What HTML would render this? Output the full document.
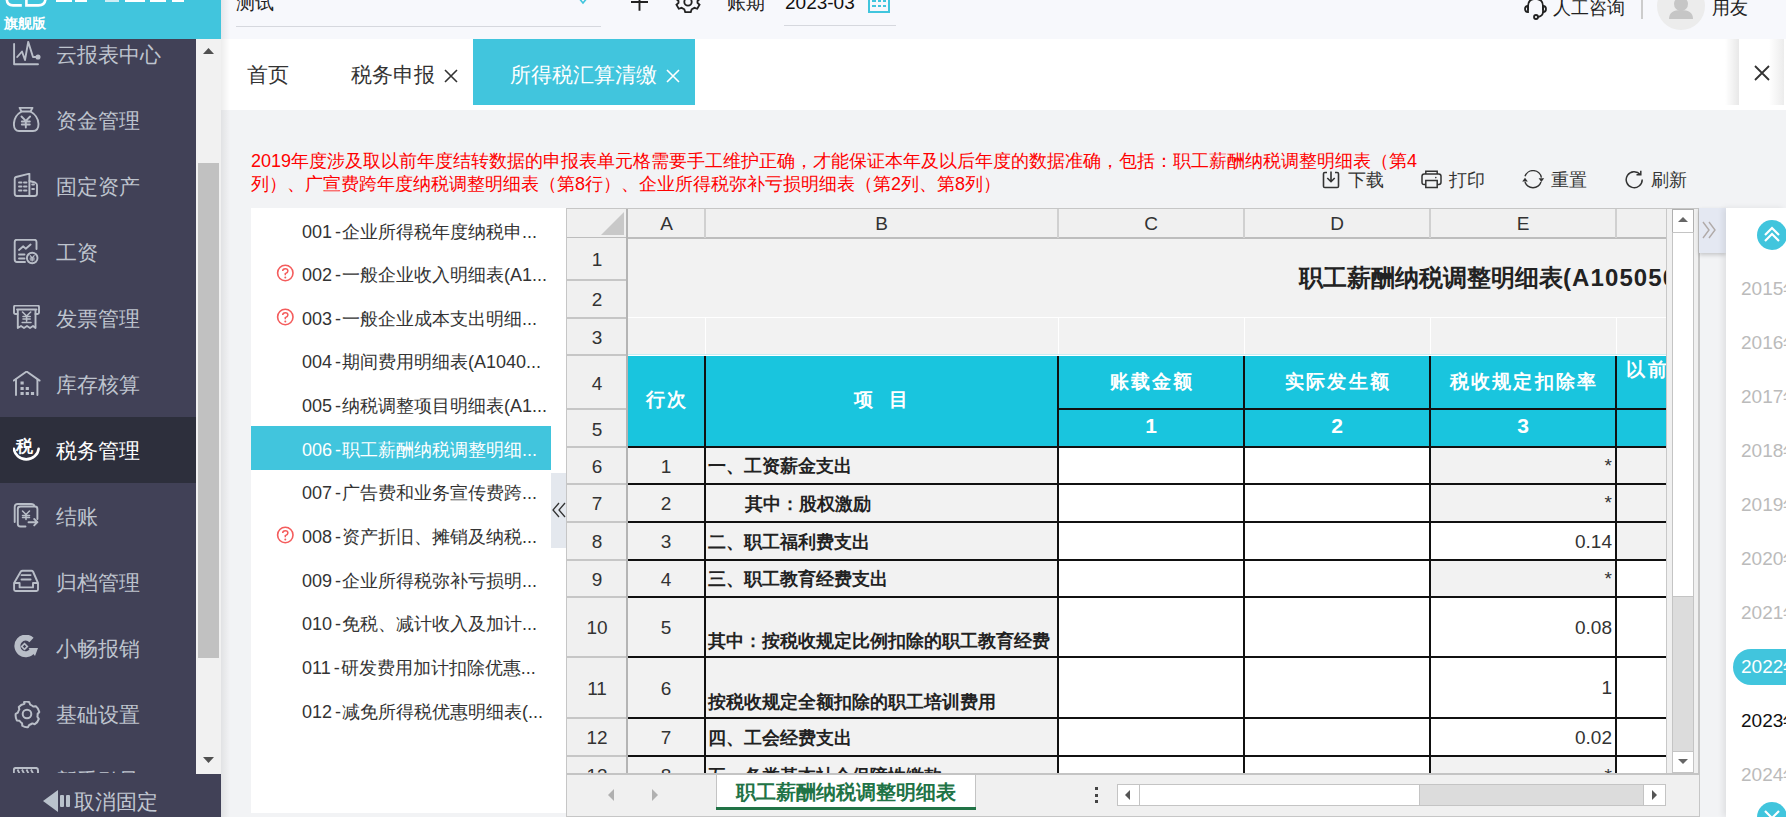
<!DOCTYPE html>
<html><head><meta charset="utf-8">
<style>
*{box-sizing:border-box;margin:0;padding:0}
html,body{width:1786px;height:817px;overflow:hidden;background:#f2f3f5;font-family:"Liberation Sans",sans-serif;color:#333}
.a{position:absolute}
.t{position:absolute;white-space:nowrap;line-height:1}
/* sidebar */
#side{left:0;top:0;width:221px;height:817px;background:#414157}
#logo{left:0;top:0;width:221px;height:39px;background:#41c5dd}
.nav{position:absolute;left:0;width:196px;height:66px}
.nav .tx{position:absolute;left:56px;top:23px;font-size:21px;line-height:21px;color:#bec4ce;white-space:nowrap}
.nav svg{position:absolute;left:13px;top:20px}
.nav.on{background:#2d2f3c}
.nav.on .tx{color:#fff}
/* header */
#hdr{left:221px;top:0;width:1565px;height:39px;background:#f7f8fc}
#tabs{left:221px;top:39px;width:1565px;height:71px;background:#fff}
/* list */
#list{left:251px;top:208px;width:315px;height:605px;background:#fff}
.li{position:absolute;left:0;width:300px;height:43.64px}
.li .tx{position:absolute;left:51px;top:14.5px;font-size:18px;line-height:19px;color:#333;white-space:nowrap}
.li.on{background:#41c5dd}
.li.on .tx{color:#fff}
.q{position:absolute;left:25px;top:12.5px}
/* sheet */
#sheet{left:566px;top:208px;width:1134px;height:609px}
#grid{left:0;top:0;width:1100px;height:565px;overflow:hidden}
.g{position:absolute}
.hl{position:absolute;height:2px;background:#000}
.vl{position:absolute;width:2px;background:#000}
.ch{position:absolute;top:0;height:30px;font-size:19px;line-height:30px;text-align:center;color:#333}
.rh{position:absolute;left:0;width:61px;font-size:19px;text-align:center;color:#333;display:flex;align-items:center;justify-content:center}
.teal{background:#1cc5de}
.wh{background:#fff}
.hd{position:absolute;color:#fff;font-weight:bold;font-size:19px;line-height:20px;white-space:nowrap;font-family:"Liberation Serif",serif;letter-spacing:2.3px;padding-left:2.3px}
.hd2{position:absolute;color:#fff;font-weight:bold;font-size:21px;line-height:20px;white-space:nowrap}
.ttl{position:absolute;color:#222;font-weight:bold;font-size:24px;line-height:26px;white-space:nowrap}
.chd{position:absolute;font-size:19px;line-height:20px;color:#333;white-space:nowrap}
.rnum{position:absolute;font-size:19px;line-height:20px;color:#333;white-space:nowrap}
.stab{position:absolute;font-size:20px;line-height:22px;color:#217346;font-weight:bold;white-space:nowrap}
.ct{position:absolute;font-size:18px;font-weight:bold;color:#222;white-space:nowrap;line-height:19px}
.num{position:absolute;font-size:19px;color:#333;white-space:nowrap;line-height:19px}
/* right */
#rp{left:1726px;top:208px;width:60px;height:609px;background:#fff;box-shadow:-3px 0 6px rgba(0,0,0,0.08)}
.yr{position:absolute;left:15px;font-size:19px;line-height:20px;color:#bbb;white-space:nowrap}
</style></head><body>

<!-- SIDEBAR -->
<div id="side" class="a">
  <div id="logo" class="a">
    <svg class="a" style="left:0;top:0" width="221" height="39">
      <path d="M6.8 -10 V-1 Q6.8 5.4 13 5.4 H21.8" fill="none" stroke="#fff" stroke-width="2.6"/>
      <path d="M26.4 -10 V5.4 H38.5 Q45.5 5.4 45.5 -2 V-10" fill="none" stroke="#fff" stroke-width="2.6"/>
      <rect x="56" y="0" width="16" height="2" fill="#fff"/><rect x="75" y="0" width="12" height="2" fill="#fff"/>
      <rect x="105" y="0" width="14" height="2" fill="#cfeef5"/><rect x="125" y="0" width="20" height="2" fill="#fff"/>
      <rect x="150" y="0" width="16" height="2" fill="#fff"/><rect x="172" y="0" width="12" height="2" fill="#fff"/>
    </svg>
    <div class="t" style="left:4px;top:16px;font-size:14px;font-weight:bold;color:#fff">旗舰版</div>
  </div>
  <div class="a" style="left:0;top:39px;width:196px;height:734px;overflow:hidden">
    <div class="nav" style="top:-18px">
      <svg width="28" height="28" viewBox="0 0 28 28" fill="none" stroke="#b9bec8" stroke-width="1.9" stroke-linecap="round" stroke-linejoin="round"><path d="M1.1 3 V23.3 H25"/><path d="M4.2 16 L9 10.5 L12 19 L15.2 0.9 L20 16 H24"/><circle cx="25" cy="16" r="1.6" fill="#b9bec8"/></svg>
      <div class="tx">云报表中心</div></div>
    <div class="nav" style="top:48px">
      <svg width="28" height="28" viewBox="0 0 28 28" fill="none" stroke="#b9bec8" stroke-width="1.9" stroke-linecap="round" stroke-linejoin="round"><path d="M6.6 0.9 H19.5 L17.5 4.5 H8.5 Z"/><path d="M8.5 4.5 Q1 9 0.9 17 Q0.9 24 6 24 H20 Q25.5 24 25.5 17 Q25.3 9 17.5 4.5"/><path d="M8.5 9.5 L12.8 13.8 L17.1 9.5 M12.8 13.8 V20.5 M8.8 14.5 H16.8 M8.8 17.5 H16.8"/></svg>
      <div class="tx">资金管理</div></div>
    <div class="nav" style="top:114px">
      <svg width="28" height="28" viewBox="0 0 28 28" fill="none" stroke="#b9bec8" stroke-width="1.9" stroke-linecap="round" stroke-linejoin="round"><path d="M16.4 23 H4 Q1.7 23 1.7 20.5 V6 Q1.7 4.5 3 4 L16.4 0.7 Z"/><path d="M16.4 8 L22 9.5 Q24 10.5 24 12 V20.5 Q24 23 21.5 23 H16.4"/><path d="M6 9.5 H8.5 M11 9.5 H13.5 M6 13.5 H8.5 M11 13.5 H13.5 M6 17.5 H8.5 M11 17.5 H13.5 M19.2 11.5 H21 M19.2 16 H21"/></svg>
      <div class="tx">固定资产</div></div>
    <div class="nav" style="top:180px">
      <svg width="28" height="28" viewBox="0 0 28 28" fill="none" stroke="#b9bec8" stroke-width="1.9" stroke-linecap="round" stroke-linejoin="round"><path d="M12 23 H4 Q1.7 23 1.7 20.5 V3 Q1.7 0.7 4 0.7 H21 Q23.5 0.7 23.5 3 V10"/><path d="M6 11 L10.3 7.3 L12.7 9.7 L17.6 5.5"/><path d="M6 15.5 H11.5 M6 19.5 H11.5"/><circle cx="19.2" cy="19" r="5.3"/><path d="M17.2 16.6 L19.2 18.8 L21.2 16.6 M19.2 18.8 V22 M17.2 19.2 H21.2 M17.2 20.8 H21.2" stroke-width="1.2"/></svg>
      <div class="tx">工资</div></div>
    <div class="nav" style="top:246px">
      <svg width="28" height="28" viewBox="0 0 28 28" fill="none" stroke="#b9bec8" stroke-width="1.9" stroke-linecap="round" stroke-linejoin="round"><path d="M4.5 9 H2.5 Q1 9 1 7.5 V2 Q1 0.5 2.5 0.5 H24.5 Q26 0.5 26 2 V7.5 Q26 9 24.5 9 H22.5"/><path d="M4.8 4.5 V23 L8 21 L11 23 L14 21 L17 23 L20 21 L22.5 23 V4.5 M4 4.5 H23.5"/><path d="M9.5 7 L13.6 11 L17.7 7 M13.6 11 V16 M10 11.5 H17.2 M10 14 H17.2 M9.2 17.5 H18" stroke-width="1.6"/></svg>
      <div class="tx">发票管理</div></div>
    <div class="nav" style="top:312px">
      <svg width="28" height="28" viewBox="0 0 28 28" fill="none" stroke="#b9bec8" stroke-width="1.9" stroke-linecap="round" stroke-linejoin="round"><path d="M0.8 9.6 L13.6 0.5 L26.6 9.6"/><path d="M3 8.5 V24 M24.4 8.5 V24"/><g fill="#b9bec8" stroke="none"><rect x="7.5" y="10.5" width="3.2" height="3"/><rect x="7.5" y="16" width="3.2" height="3"/><rect x="12.7" y="16" width="3.2" height="3"/><rect x="7.5" y="21" width="3.2" height="3"/><rect x="12.7" y="21" width="3.2" height="3"/><rect x="17.9" y="21" width="3.2" height="3"/></g></svg>
      <div class="tx">库存核算</div></div>
    <div class="nav on" style="top:378px">
      <svg width="28" height="28" viewBox="0 0 28 28" fill="none" stroke="#fff" stroke-width="2.6" stroke-linecap="round"><path d="M0.9 11.8 A12.4 11.6 0 0 0 25.6 11.8"/><text x="3.2" y="14.5" font-size="16.5" font-weight="bold" fill="#fff" stroke="none" font-family="Liberation Sans,sans-serif">税</text></svg>
      <div class="tx">税务管理</div></div>
    <div class="nav" style="top:444px">
      <svg width="28" height="28" viewBox="0 0 28 28" fill="none" stroke="#b9bec8" stroke-width="1.9" stroke-linecap="round" stroke-linejoin="round"><path d="M1.7 19 V4 Q1.7 1 4.7 1 H18 Q21 1 21.3 3"/><path d="M24.4 16 V6 Q24.4 3.5 22 3.5 H7.5 Q4.8 3.5 4.8 6 V21 Q4.8 23.5 7.5 23.5 H12.5"/><path d="M9.5 8 L13 11.5 L16.5 8 M13 11.5 V16.5 M9.5 12.5 H16.5 M9.5 14.5 H16.5" stroke-width="1.5"/><path d="M15.5 19.2 H24.4 M21.2 16 L24.4 19.2 L21.2 22.4"/></svg>
      <div class="tx">结账</div></div>
    <div class="nav" style="top:510px">
      <svg width="28" height="28" viewBox="0 0 28 28" fill="none" stroke="#b9bec8" stroke-width="1.9" stroke-linecap="round" stroke-linejoin="round"><path d="M1.1 14 L7.8 2.5 Q8.5 1.8 9.5 1.8 H18.5 Q19.5 1.8 20 2.5 L25 14 V20.5 Q25 22 23.5 22 H2.6 Q1.1 22 1.1 20.5 Z M1.1 14 H6.6 V18.4 H20 V14 H25"/><path d="M8.5 6.1 H17.6 M8.5 10.5 H17.6"/></svg>
      <div class="tx">归档管理</div></div>
    <div class="nav" style="top:576px">
      <svg width="28" height="28" viewBox="0 0 28 28"><path d="M18.5 5 A8.3 8.3 0 1 0 19.6 15.5" fill="none" stroke="#b9bec8" stroke-width="6"/><path d="M15.5 13 H25 L22 21 Z" fill="#b9bec8"/><path d="M11.5 7.5 L15.5 11.5 L11.5 15.5 L7.5 11.5 Z" fill="#b9bec8"/><path d="M11.5 9.8 L13.2 11.5 L11.5 13.2 L9.8 11.5 Z" fill="#414157"/></svg>
      <div class="tx">小畅报销</div></div>
    <div class="nav" style="top:642px">
      <svg width="28" height="28" viewBox="0 0 28 28" fill="none" stroke="#b9bec8" stroke-width="2" stroke-linejoin="round"><path d="M11 1.2 Q13.6 -0.3 16.2 1.2 L17.2 3.6 Q19 4.3 20.3 5.6 L22.9 5.3 Q25.6 7.5 26.3 11 L24.6 13 Q24.7 14.4 24.4 15.7 L25.8 17.9 Q24.8 21.3 21.8 23.2 L19.4 22.4 Q18 23.5 16.2 24 L14.9 26.3 Q11.9 26.6 9.3 24.8 L9.1 22.3 Q7.5 21.3 6.5 19.8 L3.9 19.4 Q2.2 16.3 2.7 12.9 L4.9 11.6 Q5.3 9.9 6.3 8.5 L5.8 6 Q8.1 3.4 11.5 2.7 Z"/><circle cx="14" cy="13" r="4.3"/></svg>
      <div class="tx">基础设置</div></div>
    <div class="nav" style="top:708px">
      <svg width="28" height="28" viewBox="0 0 28 28"><path d="M0.8 9 V3.2 Q0.8 0.9 3.2 0.9 H22.6 Q25 0.9 25 3.2 V9" fill="none" stroke="#b9bec8" stroke-width="2"/><path d="M4.5 2.5 L6.5 6.5 M9 2.5 L11 6.5 M13.5 2.5 L15.5 6.5 M18 2.5 L20 6.5" stroke="#b9bec8" stroke-width="1.8"/></svg>
      <div class="tx">新手引导</div></div>
  </div>
  <!-- sidebar scrollbar -->
  <div class="a" style="left:196px;top:39px;width:25px;height:735px;background:#f1f1f1"></div>
  <div class="a" style="left:198px;top:163px;width:21px;height:495px;background:#c1c1c1"></div>
  <svg class="a" style="left:196px;top:39px" width="25" height="735"><path d="M7 15 L12.5 9 L18 15 Z" fill="#505050"/><path d="M7 718 L12.5 724 L18 718 Z" fill="#505050"/></svg>
  <!-- bottom -->
  <div class="a" style="left:0;top:774px;width:221px;height:43px;background:#414157"></div>
  <svg class="a" style="left:43px;top:790px" width="30" height="22"><path d="M15 0 V22 L0 11 Z" fill="#b9c2cc"/><rect x="17" y="5" width="4" height="12" rx="1" fill="#b9c2cc"/><rect x="23" y="5" width="4" height="12" rx="1" fill="#b9c2cc"/></svg>
  <div class="t" style="left:74px;top:791px;font-size:21px;color:#c2c8d2">取消固定</div>
</div>


<!-- HEADER -->
<div id="hdr" class="a">
  <div class="t" style="left:15px;top:-7px;font-size:19px;color:#222">测试</div>
  <div class="a" style="left:15px;top:26px;width:365px;height:1px;background:#d6d8de"></div>
  <svg class="a" style="left:356px;top:0" width="12" height="6"><path d="M1 -3 L6 3 L11 -3" fill="none" stroke="#41c5dd" stroke-width="1.6"/></svg>
  <svg class="a" style="left:409px;top:0" width="20" height="14"><path d="M9.5 -8 V10.8 M1 2 H18" stroke="#222" stroke-width="1.9"/></svg>
  <svg class="a" style="left:454px;top:-11px" width="26" height="24" viewBox="0 -2 26 26" fill="none" stroke="#222" stroke-width="2"><path d="M10 1 H16 L17 4 L20 5.6 L23 4.6 L25.5 9 L23.3 11 V13 L25.5 15 L23 19.4 L20 18.4 L17 20 L16 23 H10 L9 20 L6 18.4 L3 19.4 L0.5 15 L2.7 13 V11 L0.5 9 L3 4.6 L6 5.6 L9 4 Z"/><circle cx="13" cy="12" r="4"/></svg>
  <div class="t" style="left:506px;top:-7px;font-size:19px;color:#222">账期</div>
  <div class="t" style="left:564px;top:-7px;font-size:19px;color:#111">2023-03</div>
  <div class="a" style="left:563px;top:25px;width:112px;height:1px;background:#d6d8de"></div>
  <svg class="a" style="left:647px;top:-8px" width="22" height="21"><rect x="1" y="1" width="20" height="19" fill="none" stroke="#41c5dd" stroke-width="2"/><path d="M4 9 H8 M10 9 H13 M15 9 H18 M4 14 H8 M10 14 H13 M15 14 H18" stroke="#41c5dd" stroke-width="2"/></svg>
  <!-- right -->
  <svg class="a" style="left:1303px;top:-2px" width="23" height="22" fill="none" stroke="#222" stroke-width="1.8"><path d="M4 12 V8 Q4 1 11.5 1 Q19 1 19 8 V12"/><path d="M4 8 Q1 8 1 11 Q1 14 4 14 Z M19 8 Q22 8 22 11 Q22 14 19 14 Z"/><path d="M19 14 Q19 18 14 19"/><circle cx="12" cy="19" r="2"/></svg>
  <div class="t" style="left:1332px;top:-1px;font-size:18px;color:#222">人工咨询</div>
  <div class="a" style="left:1420px;top:0;width:2px;height:19px;background:#ccc"></div>
  <div class="a" style="left:1436px;top:-18px;width:48px;height:48px;border-radius:50%;background:#ececec;overflow:hidden">
    <svg width="48" height="48"><circle cx="24" cy="22" r="7" fill="#c6c6c6"/><path d="M12 37 Q12 28 24 28 Q36 28 36 37 Z" fill="#c6c6c6"/></svg>
  </div>
  <div class="t" style="left:1491px;top:-1px;font-size:18px;color:#222">用友</div>
</div>

<!-- TABS -->
<div id="tabs" class="a">
  <div class="t" style="left:26px;top:25px;font-size:21px;color:#333">首页</div>
  <div class="t" style="left:130px;top:25px;font-size:21px;color:#333">税务申报</div>
  <svg class="a" style="left:223px;top:30px" width="14" height="14"><path d="M1 1 L13 13 M13 1 L1 13" stroke="#333" stroke-width="1.6"/></svg>
  <div class="a" style="left:252px;top:0;width:222px;height:66px;background:#41c5dd"></div>
  <div class="t" style="left:289px;top:25px;font-size:21px;color:#fff">所得税汇算清缴</div>
  <svg class="a" style="left:445px;top:30px" width="14" height="14"><path d="M1 1 L13 13 M13 1 L1 13" stroke="#fff" stroke-width="1.6"/></svg>
  <div class="a" style="left:1504px;top:0;width:14px;height:66px;background:linear-gradient(to right,rgba(0,0,0,0),rgba(0,0,0,0.09))"></div><div class="a" style="left:1518px;top:0;width:45px;height:66px;background:linear-gradient(to right,#fff 0,#fff 30px,#ececec 45px)"></div><div class="a" style="left:1563px;top:0;width:2px;height:66px;background:#fff"></div>
  <svg class="a" style="left:1533px;top:26px" width="16" height="16"><path d="M1 1 L15 15 M15 1 L1 15" stroke="#333" stroke-width="1.8"/></svg>
</div>

<!-- NOTICE -->
<div class="t" style="left:251px;top:148.5px;font-size:18px;line-height:24px;color:#f00">2019年度涉及取以前年度结转数据的申报表单元格需要手工维护正确，才能保证本年及以后年度的数据准确，包括：职工薪酬纳税调整明细表（第4</div>
<div class="t" style="left:251px;top:172px;font-size:18px;line-height:24px;color:#f00">列）、广宣费跨年度纳税调整明细表（第8行）、企业所得税弥补亏损明细表（第2列、第8列）</div>

<!-- TOOLBAR -->
<svg class="a" style="left:1322px;top:171px" width="18" height="18" fill="none" stroke="#333" stroke-width="1.6"><path d="M5 1.5 H2.8 Q1.5 1.5 1.5 2.8 V15.2 Q1.5 16.5 2.8 16.5 H15.2 Q16.5 16.5 16.5 15.2 V2.8 Q16.5 1.5 15.2 1.5 H13"/><path d="M9 0.5 V10.5 M5.3 7 L9 10.7 L12.7 7"/></svg>
<div class="t" style="left:1348px;top:171px;font-size:18px;color:#333">下载</div>
<svg class="a" style="left:1421px;top:170px" width="21" height="19" fill="none" stroke="#333" stroke-width="1.5"><path d="M4.8 4 V1.2 H16.2 V4"/><path d="M4.8 14.5 H3.2 Q1 14.5 1 12.3 V6.3 Q1 4 3.2 4 H17.8 Q20 4 20 6.3 V12.3 Q20 14.5 17.8 14.5 H16.2"/><rect x="4.8" y="10.5" width="11.4" height="7"/><circle cx="14.8" cy="7.6" r="0.8" fill="#333" stroke="none"/></svg>
<div class="t" style="left:1449px;top:171px;font-size:18px;color:#333">打印</div>
<svg class="a" style="left:1521px;top:170px" width="24" height="20" fill="none" stroke="#333" stroke-width="1.4"><path d="M4 6.3 A8.5 8.5 0 0 1 20.4 7.7"/><path d="M17.6 8.3 H23.2 L20.4 12 Z" fill="#333" stroke="none"/><path d="M20 12.1 A8.5 8.5 0 0 1 4 12.1"/><path d="M1.2 11.5 H6.8 L4 7.8 Z" fill="#333" stroke="none"/></svg>
<div class="t" style="left:1551px;top:171px;font-size:18px;color:#333">重置</div>
<svg class="a" style="left:1625px;top:170px" width="19" height="19" fill="none" stroke="#333" stroke-width="1.5"><path d="M15.3 4.5 A8 8 0 1 0 17.2 9.5"/><path d="M11.5 4.8 H15.8 V0.8"/></svg>
<div class="t" style="left:1651px;top:171px;font-size:18px;color:#333">刷新</div>

<!-- LIST -->
<div id="list" class="a">
  <div class="li" style="top:0.00px"><div class="tx">001<span style="margin:0 1px 0 3px">-</span>企业所得税年度纳税申...</div></div>
  <div class="li" style="top:43.64px"><svg class="q" width="19" height="19"><circle cx="9.3" cy="9" r="7.7" fill="none" stroke="#f45c5c" stroke-width="1.6"/><path d="M6.7 7 Q6.7 4.7 9.3 4.7 Q11.9 4.7 11.9 6.9 Q11.9 8.5 9.3 9.6 V11.3" fill="none" stroke="#f45c5c" stroke-width="1.5"/><circle cx="9.3" cy="13.6" r="1" fill="#f45c5c"/></svg><div class="tx">002<span style="margin:0 1px 0 3px">-</span>一般企业收入明细表(A1...</div></div>
  <div class="li" style="top:87.28px"><svg class="q" width="19" height="19"><circle cx="9.3" cy="9" r="7.7" fill="none" stroke="#f45c5c" stroke-width="1.6"/><path d="M6.7 7 Q6.7 4.7 9.3 4.7 Q11.9 4.7 11.9 6.9 Q11.9 8.5 9.3 9.6 V11.3" fill="none" stroke="#f45c5c" stroke-width="1.5"/><circle cx="9.3" cy="13.6" r="1" fill="#f45c5c"/></svg><div class="tx">003<span style="margin:0 1px 0 3px">-</span>一般企业成本支出明细...</div></div>
  <div class="li" style="top:130.92px"><div class="tx">004<span style="margin:0 1px 0 3px">-</span>期间费用明细表(A1040...</div></div>
  <div class="li" style="top:174.56px"><div class="tx">005<span style="margin:0 1px 0 3px">-</span>纳税调整项目明细表(A1...</div></div>
  <div class="li on" style="top:218.20px"><div class="tx">006<span style="margin:0 1px 0 3px">-</span>职工薪酬纳税调整明细...</div></div>
  <div class="li" style="top:261.84px"><div class="tx">007<span style="margin:0 1px 0 3px">-</span>广告费和业务宣传费跨...</div></div>
  <div class="li" style="top:305.48px"><svg class="q" width="19" height="19"><circle cx="9.3" cy="9" r="7.7" fill="none" stroke="#f45c5c" stroke-width="1.6"/><path d="M6.7 7 Q6.7 4.7 9.3 4.7 Q11.9 4.7 11.9 6.9 Q11.9 8.5 9.3 9.6 V11.3" fill="none" stroke="#f45c5c" stroke-width="1.5"/><circle cx="9.3" cy="13.6" r="1" fill="#f45c5c"/></svg><div class="tx">008<span style="margin:0 1px 0 3px">-</span>资产折旧、摊销及纳税...</div></div>
  <div class="li" style="top:349.12px"><div class="tx">009<span style="margin:0 1px 0 3px">-</span>企业所得税弥补亏损明...</div></div>
  <div class="li" style="top:392.76px"><div class="tx">010<span style="margin:0 1px 0 3px">-</span>免税、减计收入及加计...</div></div>
  <div class="li" style="top:436.40px"><div class="tx">011<span style="margin:0 1px 0 3px">-</span>研发费用加计扣除优惠...</div></div>
  <div class="li" style="top:480.04px"><div class="tx">012<span style="margin:0 1px 0 3px">-</span>减免所得税优惠明细表(...</div></div>
</div>
<div class="a" style="left:551px;top:473px;width:15px;height:75px;background:#e4e8ee"></div>
<svg class="a" style="left:552px;top:502px" width="14" height="16" fill="none" stroke="#333" stroke-width="1.3"><path d="M7 1 L1 8 L7 15 M13 1 L7 8 L13 15"/></svg>

<!-- SHEET -->
<div id="sheet" class="a">
<div class="g" style="left:0.0px;top:0.0px;width:1133.0px;height:607.0px;background:#f0f0f0;border:1px solid #c6c6c6"></div>
<div class="g" style="left:62px;top:30px;width:1038px;height:536px;overflow:hidden;background:#f2f2f2">
<div class="g" style="left:0.0px;top:78.5px;width:1038.0px;height:1.0px;background:#fff"></div>
<div class="g" style="left:76.5px;top:79.5px;width:1.0px;height:37.5px;background:#fff"></div>
<div class="g" style="left:429.5px;top:79.5px;width:1.0px;height:37.5px;background:#fff"></div>
<div class="g" style="left:615.5px;top:79.5px;width:1.0px;height:37.5px;background:#fff"></div>
<div class="g" style="left:801.5px;top:79.5px;width:1.0px;height:37.5px;background:#fff"></div>
<div class="g" style="left:987.5px;top:79.5px;width:1.0px;height:37.5px;background:#fff"></div>
<div class="g" style="left:0.0px;top:117.0px;width:1038.0px;height:91.5px;background:#19c5de"></div>
<div class="g" style="left:0.0px;top:116.0px;width:1038.0px;height:1.0px;background:#c8eef4"></div>
<div class="g" style="left:0.0px;top:117.0px;width:1038.0px;height:1.0px;background:#ffffff"></div>
<div class="g" style="left:430.0px;top:208.5px;width:372.0px;height:37.5px;background:#fff"></div>
<div class="g" style="left:430.0px;top:246.0px;width:372.0px;height:37.8px;background:#fff"></div>
<div class="g" style="left:430.0px;top:283.8px;width:372.0px;height:37.7px;background:#fff"></div>
<div class="g" style="left:802.0px;top:283.8px;width:186.0px;height:37.7px;background:#fff"></div>
<div class="g" style="left:430.0px;top:321.5px;width:372.0px;height:37.5px;background:#fff"></div>
<div class="g" style="left:988.0px;top:321.5px;width:50.0px;height:37.5px;background:#fff"></div>
<div class="g" style="left:430.0px;top:359.0px;width:372.0px;height:60.0px;background:#fff"></div>
<div class="g" style="left:802.0px;top:359.0px;width:186.0px;height:60.0px;background:#fff"></div>
<div class="g" style="left:988.0px;top:359.0px;width:50.0px;height:60.0px;background:#fff"></div>
<div class="g" style="left:430.0px;top:419.0px;width:372.0px;height:61.0px;background:#fff"></div>
<div class="g" style="left:802.0px;top:419.0px;width:186.0px;height:61.0px;background:#fff"></div>
<div class="g" style="left:988.0px;top:419.0px;width:50.0px;height:61.0px;background:#fff"></div>
<div class="g" style="left:430.0px;top:480.0px;width:372.0px;height:38.0px;background:#fff"></div>
<div class="g" style="left:802.0px;top:480.0px;width:186.0px;height:38.0px;background:#fff"></div>
<div class="g" style="left:988.0px;top:480.0px;width:50.0px;height:38.0px;background:#fff"></div>
<div class="g" style="left:430.0px;top:518.0px;width:372.0px;height:38.0px;background:#fff"></div>
<div class="g" style="left:988.0px;top:518.0px;width:50.0px;height:38.0px;background:#fff"></div>
<div class="g" style="left:76.0px;top:118.0px;width:2.0px;height:418.0px;background:#111"></div>
<div class="g" style="left:429.0px;top:118.0px;width:2.0px;height:418.0px;background:#111"></div>
<div class="g" style="left:615.0px;top:118.0px;width:2.0px;height:418.0px;background:#111"></div>
<div class="g" style="left:801.0px;top:118.0px;width:2.0px;height:418.0px;background:#111"></div>
<div class="g" style="left:987.0px;top:118.0px;width:2.0px;height:418.0px;background:#111"></div>
<div class="g" style="left:430.0px;top:170.0px;width:608.0px;height:2.0px;background:#111"></div>
<div class="g" style="left:0.0px;top:207.5px;width:1038.0px;height:2.0px;background:#111"></div>
<div class="g" style="left:0.0px;top:245.0px;width:1038.0px;height:2.0px;background:#111"></div>
<div class="g" style="left:0.0px;top:282.8px;width:1038.0px;height:2.0px;background:#111"></div>
<div class="g" style="left:0.0px;top:320.5px;width:1038.0px;height:2.0px;background:#111"></div>
<div class="g" style="left:0.0px;top:358.0px;width:1038.0px;height:2.0px;background:#111"></div>
<div class="g" style="left:0.0px;top:418.0px;width:1038.0px;height:2.0px;background:#111"></div>
<div class="g" style="left:0.0px;top:479.0px;width:1038.0px;height:2.0px;background:#111"></div>
<div class="g" style="left:0.0px;top:517.0px;width:1038.0px;height:2.0px;background:#111"></div>
<div class="ttl" style="left:671.0px;top:27.0px;">职工薪酬纳税调整明细表<span style="letter-spacing:1.1px">(A105050)</span></div>
<div class="hd" style="left:-0.5px;width:77px;text-align:center;top:152.0px;">行次</div>
<div class="hd" style="left:76.5px;width:353px;text-align:center;top:152.0px;">项&nbsp;&nbsp;目</div>
<div class="hd" style="left:430.0px;width:186px;text-align:center;top:134.0px;">账载金额</div>
<div class="hd" style="left:616.0px;width:186px;text-align:center;top:134.0px;">实际发生额</div>
<div class="hd" style="left:802.0px;width:186px;text-align:center;top:134.0px;">税收规定扣除率</div>
<div class="hd" style="left:996.0px;top:122.0px;">以前年度累计结转扣除额</div>
<div class="hd2" style="left:430.0px;width:186px;text-align:center;top:178.0px;">1</div>
<div class="hd2" style="left:616.0px;width:186px;text-align:center;top:178.0px;">2</div>
<div class="hd2" style="left:802.0px;width:186px;text-align:center;top:178.0px;">3</div>
<div class="num" style="left:-0.5px;width:77px;text-align:center;top:219.0px;">1</div>
<div class="ct" style="left:80.0px;top:219.0px;">一、工资薪金支出</div>
<div class="num" style="left:804.0px;width:180px;text-align:right;top:218.0px;">*</div>
<div class="num" style="left:-0.5px;width:77px;text-align:center;top:256.0px;">2</div>
<div class="ct" style="left:117.0px;top:257.0px;">其中：股权激励</div>
<div class="num" style="left:804.0px;width:180px;text-align:right;top:255.0px;">*</div>
<div class="num" style="left:-0.5px;width:77px;text-align:center;top:294.0px;">3</div>
<div class="ct" style="left:80.0px;top:295.0px;">二、职工福利费支出</div>
<div class="num" style="left:804.0px;width:180px;text-align:right;top:294.0px;">0.14</div>
<div class="num" style="left:-0.5px;width:77px;text-align:center;top:332.0px;">4</div>
<div class="ct" style="left:80.0px;top:332.0px;">三、职工教育经费支出</div>
<div class="num" style="left:804.0px;width:180px;text-align:right;top:331.0px;">*</div>
<div class="num" style="left:-0.5px;width:77px;text-align:center;top:380.0px;">5</div>
<div class="ct" style="left:80.0px;top:394.0px;">其中：按税收规定比例扣除的职工教育经费</div>
<div class="num" style="left:804.0px;width:180px;text-align:right;top:380.0px;">0.08</div>
<div class="num" style="left:-0.5px;width:77px;text-align:center;top:441.0px;">6</div>
<div class="ct" style="left:80.0px;top:455.0px;">按税收规定全额扣除的职工培训费用</div>
<div class="num" style="left:804.0px;width:180px;text-align:right;top:440.0px;">1</div>
<div class="num" style="left:-0.5px;width:77px;text-align:center;top:490.0px;">7</div>
<div class="ct" style="left:80.0px;top:491.0px;">四、工会经费支出</div>
<div class="num" style="left:804.0px;width:180px;text-align:right;top:490.0px;">0.02</div>
<div class="num" style="left:-0.5px;width:77px;text-align:center;top:528.0px;">8</div>
<div class="ct" style="left:80.0px;top:529.0px;">五、各类基本社会保障性缴款</div>
<div class="num" style="left:804.0px;width:180px;text-align:right;top:528.0px;">*</div>
</div>
<div class="g" style="left:0.0px;top:0.0px;width:1100.0px;height:30.0px;background:#f0f0f0"></div>
<div class="g" style="left:0.0px;top:29.0px;width:1100.0px;height:2.0px;background:#bdbdbd"></div>
<div class="g" style="left:138.0px;top:0.0px;width:2.0px;height:30.0px;background:#d0d0d0"></div>
<div class="g" style="left:491.0px;top:0.0px;width:2.0px;height:30.0px;background:#d0d0d0"></div>
<div class="g" style="left:677.0px;top:0.0px;width:2.0px;height:30.0px;background:#d0d0d0"></div>
<div class="g" style="left:863.0px;top:0.0px;width:2.0px;height:30.0px;background:#d0d0d0"></div>
<div class="g" style="left:1049.0px;top:0.0px;width:2.0px;height:30.0px;background:#d0d0d0"></div>
<div class="g" style="left:1100.0px;top:0.0px;width:1.0px;height:565.0px;background:#c8c8c8"></div>
<div class="chd" style="left:-49.5px;width:300px;text-align:center;top:6.0px;">A</div>
<div class="chd" style="left:165.5px;width:300px;text-align:center;top:6.0px;">B</div>
<div class="chd" style="left:435.0px;width:300px;text-align:center;top:6.0px;">C</div>
<div class="chd" style="left:621.0px;width:300px;text-align:center;top:6.0px;">D</div>
<div class="chd" style="left:807.0px;width:300px;text-align:center;top:6.0px;">E</div>
<svg class="g" style="left:35px;top:3px" width="24" height="24"><path d="M0 24 L23 24 L23 1 Z" fill="#c8c8c8"/></svg>
<div class="g" style="left:0.0px;top:30.0px;width:62.0px;height:535.0px;background:#f0f0f0"></div>
<div class="g" style="left:60.0px;top:0.0px;width:2.0px;height:565.0px;background:#b4b4b4"></div>
<div class="g" style="left:0.0px;top:71.0px;width:60.0px;height:2.0px;background:#c6c6c6"></div>
<div class="g" style="left:0.0px;top:108.5px;width:60.0px;height:2.0px;background:#c6c6c6"></div>
<div class="g" style="left:0.0px;top:146.0px;width:60.0px;height:2.0px;background:#c6c6c6"></div>
<div class="g" style="left:0.0px;top:200.0px;width:60.0px;height:2.0px;background:#c6c6c6"></div>
<div class="g" style="left:0.0px;top:237.5px;width:60.0px;height:2.0px;background:#c6c6c6"></div>
<div class="g" style="left:0.0px;top:275.0px;width:60.0px;height:2.0px;background:#c6c6c6"></div>
<div class="g" style="left:0.0px;top:312.8px;width:60.0px;height:2.0px;background:#c6c6c6"></div>
<div class="g" style="left:0.0px;top:350.5px;width:60.0px;height:2.0px;background:#c6c6c6"></div>
<div class="g" style="left:0.0px;top:388.0px;width:60.0px;height:2.0px;background:#c6c6c6"></div>
<div class="g" style="left:0.0px;top:448.0px;width:60.0px;height:2.0px;background:#c6c6c6"></div>
<div class="g" style="left:0.0px;top:509.0px;width:60.0px;height:2.0px;background:#c6c6c6"></div>
<div class="g" style="left:0.0px;top:547.0px;width:60.0px;height:2.0px;background:#c6c6c6"></div>
<div class="rnum" style="left:-119.0px;width:300px;text-align:center;top:42.0px;">1</div>
<div class="rnum" style="left:-119.0px;width:300px;text-align:center;top:82.0px;">2</div>
<div class="rnum" style="left:-119.0px;width:300px;text-align:center;top:120.0px;">3</div>
<div class="rnum" style="left:-119.0px;width:300px;text-align:center;top:166.0px;">4</div>
<div class="rnum" style="left:-119.0px;width:300px;text-align:center;top:212.0px;">5</div>
<div class="rnum" style="left:-119.0px;width:300px;text-align:center;top:249.0px;">6</div>
<div class="rnum" style="left:-119.0px;width:300px;text-align:center;top:286.0px;">7</div>
<div class="rnum" style="left:-119.0px;width:300px;text-align:center;top:324.0px;">8</div>
<div class="rnum" style="left:-119.0px;width:300px;text-align:center;top:362.0px;">9</div>
<div class="rnum" style="left:-119.0px;width:300px;text-align:center;top:410.0px;">10</div>
<div class="rnum" style="left:-119.0px;width:300px;text-align:center;top:471.0px;">11</div>
<div class="rnum" style="left:-119.0px;width:300px;text-align:center;top:520.0px;">12</div>
<div class="rnum" style="left:-119.0px;width:300px;text-align:center;top:558.0px;">13</div>
<div class="g" style="left:0.0px;top:566.0px;width:1133.0px;height:42.0px;background:#f0f0f0"></div>
<div class="g" style="left:1.0px;top:565.0px;width:1132.0px;height:2.0px;background:#c4c4c4"></div>
<div class="g" style="left:150.0px;top:567.0px;width:260.0px;height:35.0px;background:#fff;border-left:1px solid #c4c4c4;border-right:1px solid #c4c4c4"></div>
<div class="g" style="left:150.0px;top:599.0px;width:260.0px;height:3.0px;background:#217346"></div>
<div class="stab" style="left:130.0px;width:300px;text-align:center;top:573.0px;">职工薪酬纳税调整明细表</div>
<svg class="g" style="left:40px;top:580px" width="60" height="14"><path d="M8 1 L2 7 L8 13 Z" fill="#b0b0b0"/><path d="M46 1 L52 7 L46 13 Z" fill="#b0b0b0"/></svg>
<div class="g" style="left:528.5px;top:579.0px;width:3.0px;height:3.0px;background:#444"></div>
<div class="g" style="left:528.5px;top:585.5px;width:3.0px;height:3.0px;background:#444"></div>
<div class="g" style="left:528.5px;top:592.0px;width:3.0px;height:3.0px;background:#444"></div>
<div class="g" style="left:551.0px;top:576.0px;width:549.0px;height:22.0px;background:#dcdcdc;border:1px solid #c4c4c4"></div>
<div class="g" style="left:551.0px;top:576.0px;width:23.0px;height:22.0px;background:#fff;border:1px solid #c4c4c4"></div>
<div class="g" style="left:573.0px;top:576.0px;width:281.0px;height:22.0px;background:#fff;border:1px solid #c4c4c4"></div>
<div class="g" style="left:1077.0px;top:576.0px;width:23.0px;height:22.0px;background:#fff;border:1px solid #c4c4c4"></div>
<svg class="g" style="left:551px;top:576px" width="549" height="22"><path d="M13 6 L8 11 L13 16 Z" fill="#555"/><path d="M535 6 L540 11 L535 16 Z" fill="#555"/></svg>
<div class="g" style="left:1106.0px;top:1.0px;width:22.0px;height:563.0px;background:#dcdcdc;border:1px solid #c4c4c4"></div>
<div class="g" style="left:1106.0px;top:1.0px;width:22.0px;height:24.0px;background:#fff;border:1px solid #b0b0b0"></div>
<div class="g" style="left:1106.0px;top:24.0px;width:22.0px;height:365.0px;background:#fff;border:1px solid #c4c4c4"></div>
<div class="g" style="left:1106.0px;top:543.0px;width:22.0px;height:22.0px;background:#fff;border:1px solid #c4c4c4"></div>
<svg class="g" style="left:1106px;top:1px" width="22" height="563"><path d="M6 13 L11 8 L16 13 Z" fill="#666"/><path d="M6 550 L11 555 L16 550 Z" fill="#666"/></svg>
<div class="g" style="left:0.0px;top:0.0px;width:1.0px;height:609.0px;background:#c6c6c6"></div>
<div class="g" style="left:0.0px;top:0.0px;width:1134.0px;height:1.0px;background:#c6c6c6"></div>
<div class="g" style="left:1133.0px;top:0.0px;width:1.0px;height:609.0px;background:#c6c6c6"></div>
<div class="g" style="left:0.0px;top:608.0px;width:1134.0px;height:1.0px;background:#c6c6c6"></div>
</div>
<div class="a" style="left:1699px;top:208px;width:27px;height:45px;background:#e4e8f2;box-shadow:0 2px 4px rgba(0,0,0,0.18)"></div>
<svg class="a" style="left:1701px;top:220px" width="16" height="20" fill="none" stroke="#b0aaa8" stroke-width="1.4"><path d="M2 2 L8 10 L2 18 M8 2 L14 10 L8 18"/></svg>

<!-- RIGHT PANEL -->
<div id="rp" class="a">
  <svg class="a" style="left:31px;top:12px" width="30" height="30"><circle cx="15" cy="15" r="15" fill="#41c5dd"/><path d="M8 15 L15 8 L22 15 M8 21 L15 14 L22 21" fill="none" stroke="#fff" stroke-width="2.2"/></svg>
  <div class="yr" style="top:71px">2015年</div>
  <div class="yr" style="top:125px">2016年</div>
  <div class="yr" style="top:179px">2017年</div>
  <div class="yr" style="top:233px">2018年</div>
  <div class="yr" style="top:287px">2019年</div>
  <div class="yr" style="top:341px">2020年</div>
  <div class="yr" style="top:395px">2021年</div>
  <div class="a" style="left:7px;top:441px;width:80px;height:36px;border-radius:18px;background:#41c5dd"></div>
  <div class="yr" style="top:449px;color:#fff">2022年</div>
  <div class="yr" style="top:503px;color:#111">2023年</div>
  <div class="yr" style="top:557px">2024年</div>
  <svg class="a" style="left:31px;top:594px" width="30" height="30"><circle cx="15" cy="15" r="15" fill="#41c5dd"/><path d="M8 9 L15 16 L22 9" fill="none" stroke="#fff" stroke-width="2.2"/></svg>
</div>
<div class="a" style="left:221px;top:0;width:9px;height:817px;background:linear-gradient(to right,rgba(0,0,0,0.07),rgba(0,0,0,0))"></div>
</body></html>
